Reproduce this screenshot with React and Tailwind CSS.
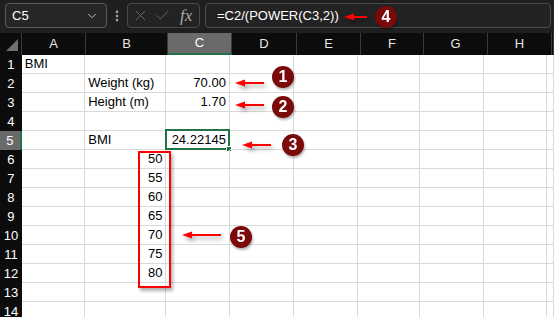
import React from 'react';
import { ChevronDown, X, Check, EllipsisVertical } from 'lucide-react';

const COLS = ['A', 'B', 'C', 'D', 'E', 'F', 'G', 'H', ''];
const WIDTHS = ['w-[64px]', 'w-[82px]', 'w-[64px]', 'w-[65px]', 'w-[64px]', 'w-[63px]', 'w-[64px]', 'w-[64px]', 'flex-1'];

const data = {
  1: { A: 'BMI' },
  2: { B: 'Weight (kg)', C: '70.00' },
  3: { B: 'Height (m)', C: '1.70' },
  5: { B: 'BMI', C: '24.22145' },
  6: { B: '50' },
  7: { B: '55' },
  8: { B: '60' },
  9: { B: '65' },
  10: { B: '70' },
  11: { B: '75' },
  12: { B: '80' },
};

const isNumber = (v) => /^[\d.]+$/.test(v);

const Badge = ({ n, x, y }) => (
  <div
    className="absolute w-[22px] h-[22px] rounded-full bg-[#7a0a0a] text-white font-bold text-[16px] flex items-center justify-center drop-shadow-[1px_2px_1px_rgba(0,0,0,0.3)]"
    style={{ left: x - 11, top: y - 11 }}
  >
    {n}
  </div>
);

const arrows = [
  { tail: 264, tip: 235, y: 83 },
  { tail: 264, tip: 235, y: 105 },
  { tail: 271, tip: 242, y: 145 },
  { tail: 367, tip: 344, y: 17 },
  { tail: 221, tip: 182, y: 235 },
];

export default function App() {
  return (
    <div className="relative w-[554px] h-[317px] overflow-hidden bg-white font-['Liberation_Sans',Arial,sans-serif]">
      {/* Formula bar */}
      <div className="flex items-start h-[33px] bg-[#1f1f1f] pt-[3px] pl-[5px] pr-[3px]">
        <div className="w-[102px] h-[25px] rounded-[4px] border border-[#5a5a5a] bg-[#262626] flex items-center justify-between pl-[6px] pr-[7px]">
          <span className="text-white text-[13px]">C5</span>
          <ChevronDown className="w-[14px] h-[14px] text-[#cfcfcf]" strokeWidth={1.5} />
        </div>
        <div className="w-[20px] h-[25px] flex items-center justify-center">
          <EllipsisVertical className="w-[14px] h-[14px] text-[#a8a8a8]" strokeWidth={2.5} />
        </div>
        <div className="w-[73px] h-[25px] rounded-[4px] border border-[#4a4a4a] bg-[#232323] flex items-center pl-[4px] gap-[5px]">
          <X className="w-[17px] h-[17px] text-[#6c6c6c]" strokeWidth={1.3} />
          <Check className="w-[17px] h-[17px] text-[#6c6c6c]" strokeWidth={1.3} />
          <span className="ml-[4px] text-[17px] italic text-[#a8a8a8] font-['Liberation_Serif',serif]">fx</span>
        </div>
        <div className="ml-[5px] flex-1 h-[25px] rounded-[4px] border border-[#4a4a4a] bg-[#232323] flex items-center pl-[11px]">
          <span className="text-white text-[13px]">=C2/(POWER(C3,2))</span>
        </div>
      </div>

      {/* Column headers */}
      <div className="flex h-[22px] bg-[#0c0c0c]">
        <div className="w-[22px] relative border-r border-[#3a3a3a]">
          <div className="absolute right-[3px] bottom-[4px] w-0 h-0 border-l-[12px] border-l-transparent border-b-[12px] border-b-[#6e6e6e]" />
        </div>
        {COLS.map((c, i) => (
          <div
            key={i}
            className={`${WIDTHS[i]} flex items-center justify-center text-[13px] border-r border-[#3a3a3a] ${
              c === 'C' ? 'bg-[#6a6a6a] border-b-2 border-b-[#217346] text-white' : 'text-[#e6e6e6]'
            }`}
          >
            {c}
          </div>
        ))}
      </div>

      {/* Rows */}
      {Array.from({ length: 14 }, (_, r) => r + 1).map((r) => (
        <div key={r} className="flex h-[19px]">
          <div
            className={`w-[22px] flex items-center justify-center text-[13px] text-white ${
              r === 5 ? 'bg-[#6a6a6a] border-r-2 border-[#217346]' : 'bg-[#0c0c0c]'
            }`}
          >
            {r}
          </div>
          {COLS.map((c, i) => {
            const v = (data[r] || {})[c];
            return (
              <div
                key={i}
                className={`${WIDTHS[i]} relative flex items-center px-[3px] text-[13px] text-black border-r border-b border-[#d9d9d9] ${
                  v && isNumber(v) ? 'justify-end' : 'justify-start'
                }`}
              >
                {v}
                {r === 5 && c === 'C' && (
                  <div className="absolute -left-px -top-[2px] -right-px -bottom-px border-2 border-[#217346]">
                    <div className="absolute -right-[4px] -bottom-[4px] w-[6px] h-[6px] bg-[#217346] border border-white" />
                  </div>
                )}
              </div>
            );
          })}
        </div>
      ))}

      {/* Red highlight box */}
      <div className="absolute left-[138px] top-[151px] w-[33px] h-[137px] border-2 border-[#ff0000] shadow-[2px_3px_3px_rgba(0,0,0,0.3)]" />

      {/* Arrows */}
      <svg className="absolute left-0 top-0 w-[554px] h-[317px] pointer-events-none drop-shadow-[2px_3px_2px_rgba(0,0,0,0.35)]" viewBox="0 0 554 317">
        {arrows.map((a, i) => (
          <g key={i}>
            <line x1={a.tail} y1={a.y} x2={a.tip + 8} y2={a.y} stroke="#ff0000" strokeWidth="2" />
            <polygon points={`${a.tip},${a.y} ${a.tip + 10},${a.y - 3.5} ${a.tip + 10},${a.y + 3.5}`} fill="#ff0000" />
          </g>
        ))}
      </svg>

      <Badge n="1" x={283} y={77} />
      <Badge n="2" x={283} y={107} />
      <Badge n="3" x={293} y={145} />
      <Badge n="4" x={386} y={17} />
      <Badge n="5" x={241} y={237} />
    </div>
  );
}
